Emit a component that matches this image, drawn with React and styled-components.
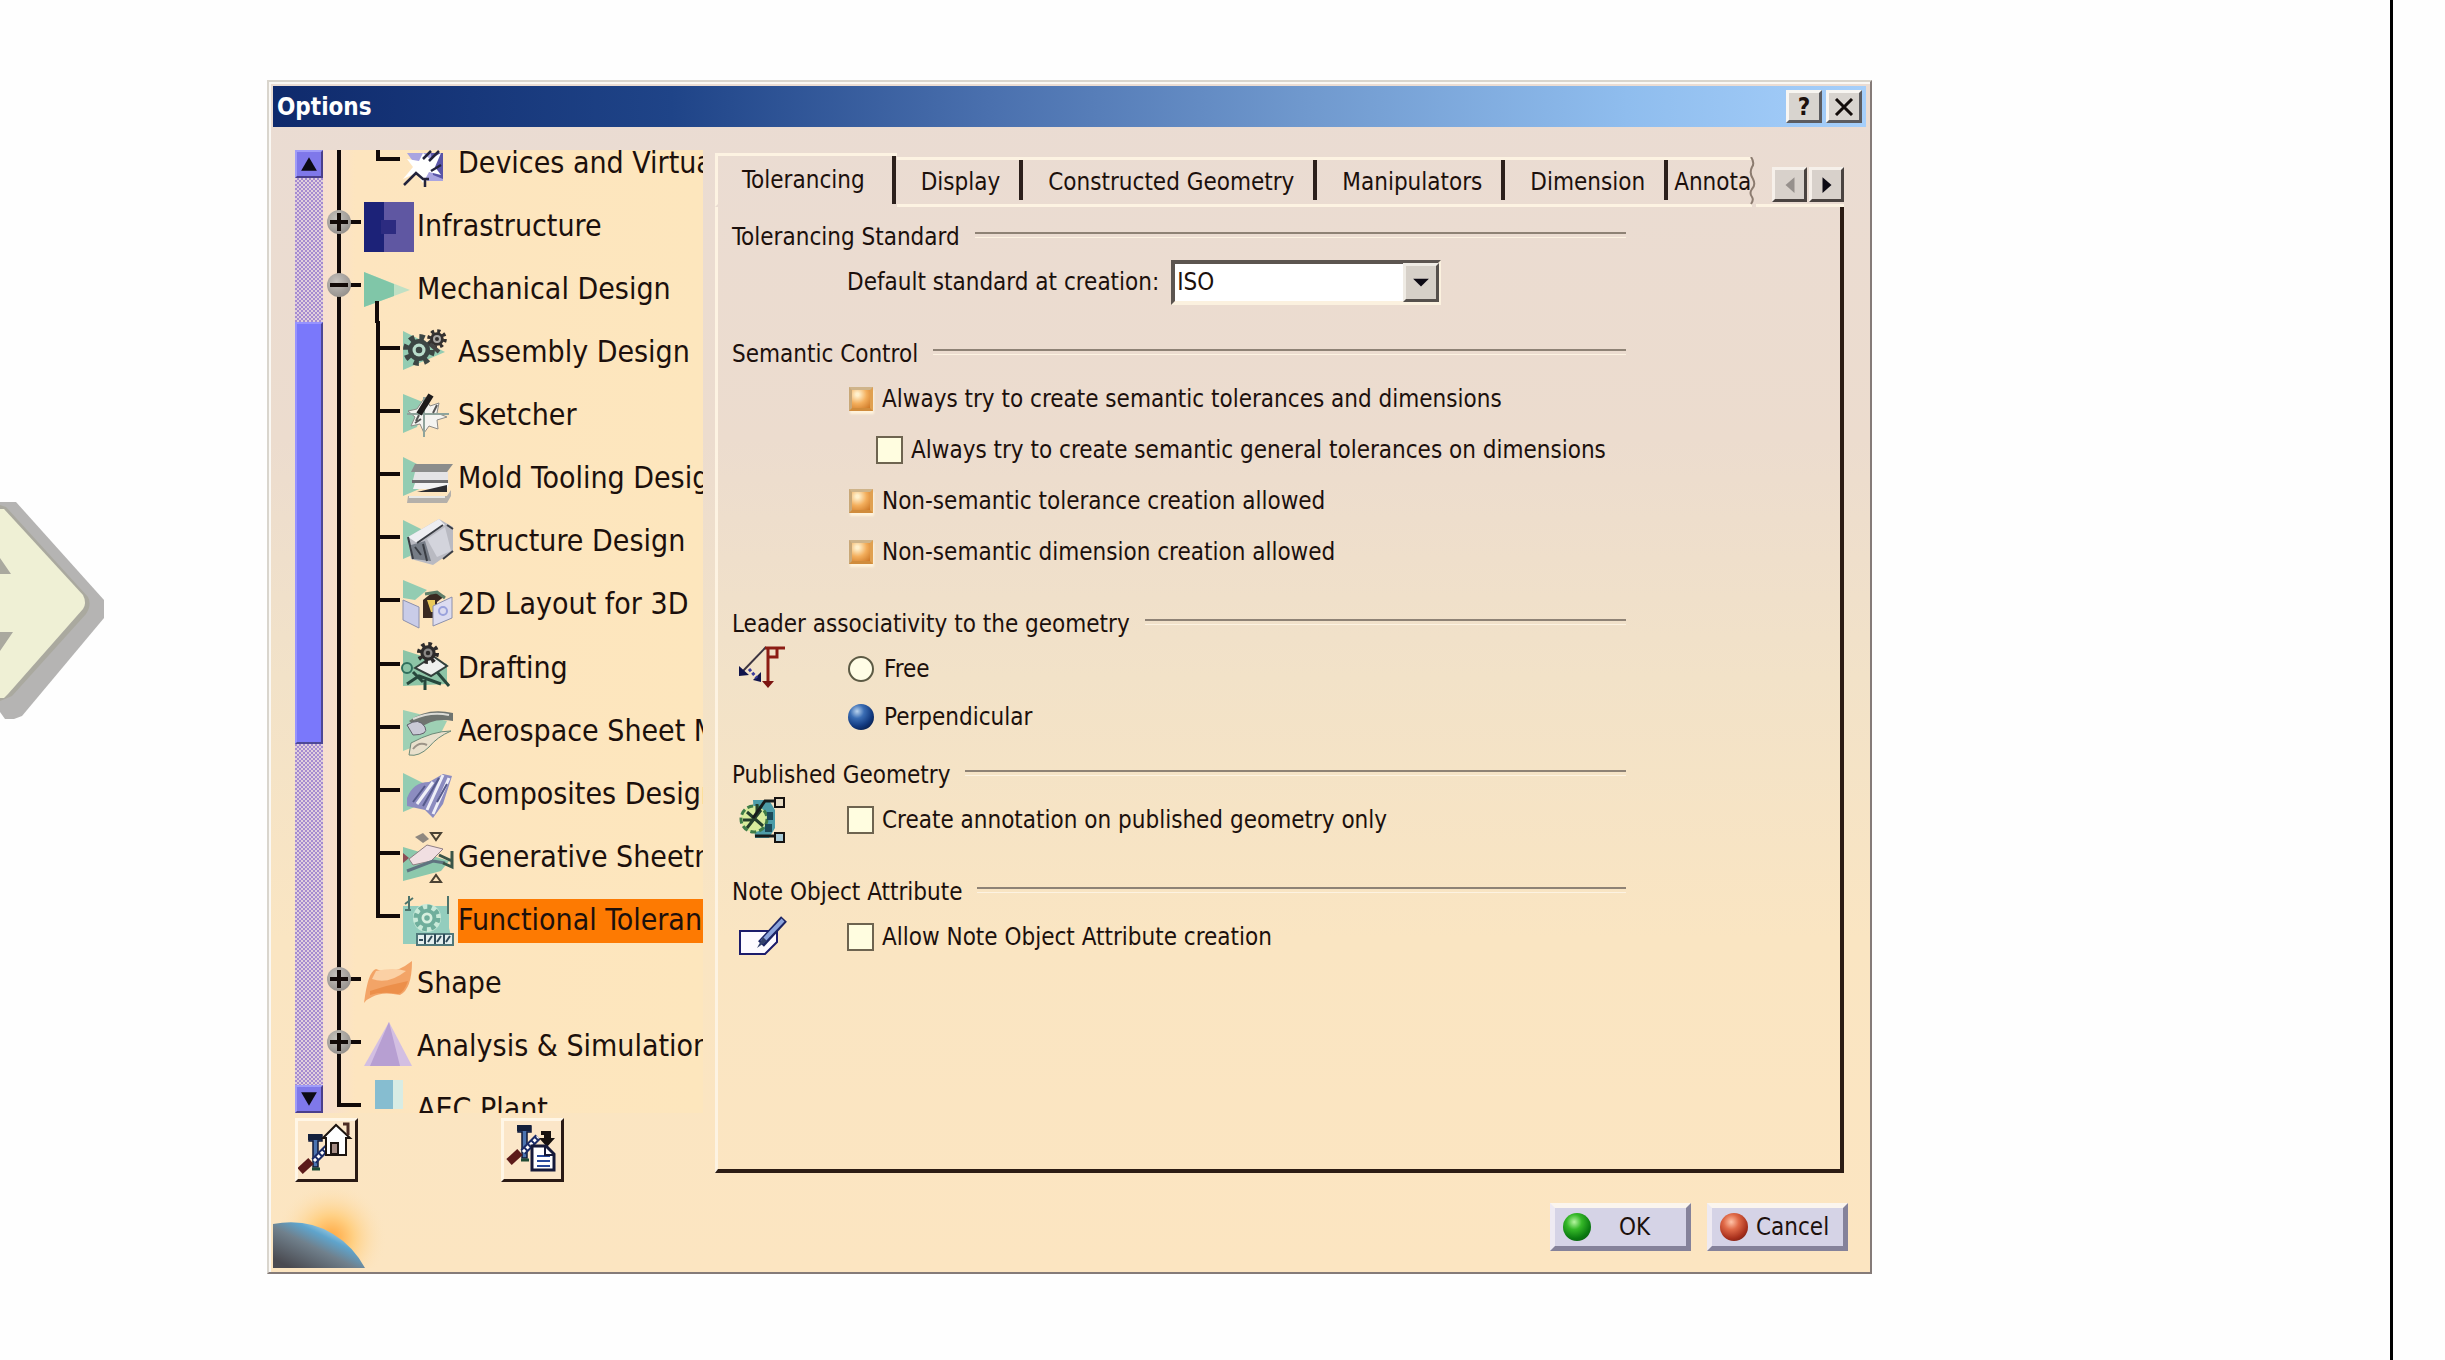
import React, { useState } from "react";
import styled, { createGlobalStyle, css } from "styled-components";

const GlobalStyle = createGlobalStyle`
  * {
    box-sizing: border-box;
  }

  body {
    margin: 0;
    background: #fefefe;
    color: #1c100c;
    font-family: "DejaVu Sans Condensed", "Noto Sans", sans-serif;
    font-size: 24px;
    line-height: 28px;
  }

  button, select, input {
    margin: 0;
    font: inherit;
    color: inherit;
  }
`;

const Page = styled.div`
  display: flex;
  align-items: flex-start;
  min-height: 100vh;
  margin-right: 52px;
  border-right: 3px solid #000;
`;

const Margin = styled.div`
  flex: 0 0 267px;
  padding-top: 502px;

  svg {
    display: block;
  }
`;

const Window = styled.section`
  flex: 0 1 1605px;
  min-width: 0;
  margin-top: 80px;
  border: 2px solid;
  border-color: #d9d5cd #857b78 #857b78 #d9d5cd;
  padding: 4px;
  background: linear-gradient(#eadcd3 0%, #ecdcce 30%, #f2e2c8 50%, #fae5c2 72%, #fce5c1 100%);
  box-shadow: inset 2px 2px 0 #faf8f4;
`;

const TitleBar = styled.header`
  display: flex;
  align-items: center;
  gap: 4px;
  height: 41px;
  padding: 0 4px;
  background: linear-gradient(90deg, #0f2a6c 0%, #1f4488 25%, #4a70ae 45%, #7099ce 65%, #8fbdee 85%, #a6cffa 100%);
`;

const Title = styled.h1`
  margin: 0;
  flex: 1;
  font-size: 24px;
  line-height: 28px;
  color: #fff;
`;

const CaptionButton = styled.button`
  display: flex;
  align-items: center;
  justify-content: center;
  width: 36px;
  height: 33px;
  padding: 0;
  border: 3px solid;
  border-color: #f8f6f2 #5c5c60 #5c5c60 #f8f6f2;
  background: #d8d4cf;
  font-weight: bold;
`;

const Body = styled.div`
  display: flex;
  gap: 12px;
  padding: 23px 22px 0;
`;

const Side = styled.div`
  flex: 0 0 408px;
  min-width: 0;
`;

const TreePane = styled.div`
  display: flex;
  height: 963px;
  overflow: hidden;
  background: linear-gradient(90deg, #f6dfd0 28px, #fde5bf 60px, #fde6bd 100%);
`;

const ScrollBar = styled.div`
  flex: 0 0 28px;
  display: flex;
  flex-direction: column;
  background: repeating-conic-gradient(#a58bd0 0 25%, #e0cfdc 0 50%) 0 0 / 4px 4px;
`;

const ScrollButton = styled.button`
  display: flex;
  align-items: center;
  justify-content: center;
  height: 28px;
  padding: 0;
  border: 2px solid;
  border-color: #a09cf8 #4a3f8c #4a3f8c #a09cf8;
  background: #7f78ea;
`;

const ScrollTrack = styled.div`
  flex: 1;
  padding-top: 144px;
`;

const ScrollThumb = styled.div`
  height: 422px;
  border: 2px solid;
  border-color: #9793ff #4d4796 #4d4796 #9793ff;
  background: #7a78fb;
`;

const Tree = styled.ul`
  flex: 1;
  min-width: 0;
  display: flex;
  flex-direction: column;
  height: 1010px;
  margin: -18px 0 0;
  padding: 0 0 0 14px;
  overflow: hidden;
  list-style: none;
  font-size: 30px;
  line-height: 42px;
`;

const TreeRow = styled.li`
  flex: 1;
  display: flex;
  align-items: center;
  white-space: nowrap;
`;

/* vertical line of one tree level, with an optional branch to the right */
const Trunk = styled.span`
  align-self: stretch;
  flex: 0 0 ${(p) => (p.$level === 1 ? 39 : 27)}px;
  position: relative;

  &::before {
    content: "";
    position: absolute;
    left: 0;
    top: 0;
    bottom: ${(p) => (p.$end ? "calc(50% + 3px)" : 0)};
    width: 4px;
    background: #120a08;
  }

  ${(p) =>
    p.$branch &&
    css`
      &::after {
        content: "";
        position: absolute;
        left: 0;
        right: 3px;
        top: calc(50% - 7px);
        height: 4px;
        background: #120a08;
      }
    `}
`;

const Toggle = styled.button`
  position: absolute;
  z-index: 1;
  left: -10px;
  top: calc(50% - 17px);
  width: 24px;
  height: 24px;
  padding: 0;
  border: 0;
  border-radius: 50%;
  background: radial-gradient(circle at 40% 35%, #c6c2bd, #85817d);

  svg {
    display: block;
  }
`;

const TreeIcon = styled.svg`
  flex: 0 0 50px;
  width: 50px;
  height: 50px;
  overflow: visible;
`;

const TreeLabel = styled.span`
  flex: 1;
  overflow: hidden;
  margin-left: ${(p) => (p.$child ? 5 : 3)}px;
  height: 44px;
  background: ${(p) => (p.$selected ? "#fd7a02" : "transparent")};
`;

const SideTools = styled.div`
  display: flex;
  gap: 143px;
  margin-top: 5px;
`;

const ToolButton = styled.button`
  width: 63px;
  height: 64px;
  padding: 0;
  border: 3px solid;
  border-color: #fff6e6 #2a1a14 #2a1a14 #fff6e6;
  background: #fbe6c8;

  svg {
    display: block;
  }
`;

const Main = styled.div`
  flex: 1;
  min-width: 0;
  display: flex;
  flex-direction: column;
  padding: 3px 0 9px;
`;

const TabList = styled.div`
  display: flex;
  align-items: stretch;
  height: 54px;
`;

const Tab = styled.button`
  flex: none;
  height: 50px;
  align-self: flex-end;
  padding: 0 24px;
  border: 0;
  border-top: 3px solid #fdf3e2;
  border-bottom: 3px solid #fdf3e2;
  background: linear-gradient(#2c201c, #2c201c) right 1px top 0 / 4px 40px no-repeat;
  line-height: 38px;
  white-space: nowrap;

  ${(p) =>
    p.$active &&
    css`
      height: 54px;
      padding: 0 32px 0 24px;
      border-left: 3px solid #fdf3e2;
      border-bottom-color: transparent;
      background-size: 4px 48px;
      line-height: 48px;
    `}

  ${(p) =>
    p.$cut &&
    css`
      width: 83px;
      padding: 0 0 0 5px;
      overflow: hidden;
      background: none;
      text-align: left;
    `}
`;

const TornEdge = styled.svg`
  flex: none;
  align-self: flex-end;
  width: 8px;
  height: 50px;
  margin-left: -4px;
`;

const TabScroller = styled.div`
  flex: 1;
  display: flex;
  justify-content: flex-end;
  gap: 2px;
  padding-top: 14px;
  border-bottom: 3px solid #fdf3e2;
`;

const ArrowButton = styled.button`
  display: flex;
  align-items: center;
  justify-content: center;
  width: 35px;
  height: 35px;
  padding: 0;
  border: 3px solid;
  border-color: #f6f0ea #4a4340 #4a4340 #f6f0ea;
  background: #d8d1cb;
`;

const Panel = styled.div`
  flex: 1;
  padding: 16px 214px 0 14px;
  border: solid;
  border-width: 0 4px 4px 3px;
  border-color: #2c1c14 #2c1c14 #2c1c14 #fdf3e2;
`;

const Group = styled.fieldset`
  min-width: 0;
  margin: 0 0 ${(p) => (p.$tight ? 20 : 34)}px;
  padding: 0;
  border: 0;
`;

const Legend = styled.legend`
  display: flex;
  width: 100%;
  padding: 0;
  gap: 15px;

  &::after {
    content: "";
    flex: 1;
    height: 3px;
    margin-top: 9px;
    border-top: 2px solid #8e8275;
    border-bottom: 1px solid #fdf3e2;
  }
`;

const GroupBody = styled.div`
  display: flex;
  margin-top: 7px;
`;

const IconSlot = styled.div`
  flex: 0 0 115px;
  padding-left: 7px;

  svg {
    display: block;
  }
`;

const Rows = styled.div`
  flex: 1;
  display: flex;
  flex-direction: column;
  gap: ${(p) => p.$gap || 0}px;
`;

const Field = styled.div`
  display: flex;
  align-items: center;
  height: 48px;
  padding-left: ${(p) => (p.$indent ? 29 : 0)}px;
  white-space: nowrap;
`;

const CheckBox = styled.input.attrs({ type: "checkbox" })`
  appearance: none;
  flex: none;
  width: 27px;
  height: 28px;
  margin-right: 8px;
  border: 2px solid #6e6450;
  background: #fffde0;

  &:checked {
    width: 24px;
    height: 24px;
    margin: 0 9px 0 2px;
    border: 3px solid;
    border-color: #cfb48a #e0a050 #d08c3c #c9a878;
    background: radial-gradient(circle at 30% 25%, #fff0cc 8%, #f3ae5c 50%, #cc7624 100%);
    box-shadow: 1px 3px 2px #fff3dc;
  }
`;

const Radio = styled.input.attrs({ type: "radio" })`
  appearance: none;
  flex: none;
  width: 26px;
  height: 26px;
  margin: 0 10px 0 1px;
  border: 2px solid #5c5a44;
  border-radius: 50%;
  background: #fffde6;

  &:checked {
    border: 0;
    background: radial-gradient(circle at 35% 28%, #b9d3ee 0%, #3a6db4 28%, #123a80 60%, #0a2456 78%, #6f9bd0 100%);
  }
`;

const SelectBox = styled.div`
  position: relative;
  width: 270px;
  height: 45px;
  margin-left: 12px;
  border: 4px solid;
  border-color: #5c5550 #fbf1df #fbf1df #5c5550;
  background: #fff;
`;

const Select = styled.select`
  appearance: none;
  width: 100%;
  height: 100%;
  padding: 0 38px 0 2px;
  border: 0;
  background: transparent;
`;

const DropArrow = styled.span`
  position: absolute;
  top: -1px;
  right: -2px;
  display: flex;
  align-items: center;
  justify-content: center;
  width: 36px;
  height: 39px;
  border: 3px solid;
  border-color: #efebe4 #55504c #55504c #efebe4;
  background: #d6d0c8;
  pointer-events: none;
`;

const Footer = styled.footer`
  display: flex;
  align-items: flex-end;
  justify-content: flex-end;
  gap: 16px;
  height: 86px;
  padding-right: 18px;
`;

const GlobeArt = styled.svg`
  width: 130px;
  height: 86px;
  margin-right: auto;
`;

const PushButton = styled.button`
  display: flex;
  align-items: center;
  width: 141px;
  height: 48px;
  margin-bottom: 17px;
  padding: 0 0 0 8px;
  gap: ${(p) => (p.$wide ? 28 : 8)}px;
  border: 5px solid;
  border-color: #fbf5ee #85829a #85829a #eeeaf2;
  background: #d5d3e6;
`;

const Ball = styled.span`
  flex: none;
  width: 28px;
  height: 28px;
  border-radius: 50%;
  background: ${(p) =>
    p.$tone === "green"
      ? "radial-gradient(circle at 40% 32%, #b5f5a0 0%, #35b828 30%, #0a7a10 65%, #0b4a12 100%)"
      : "radial-gradient(circle at 40% 32%, #ffc4a8 0%, #e06a48 30%, #a8301c 65%, #541410 100%)"};
`;

const Gear = ({ x, y, r, fill = "#3c4644", hole = "#b9dccb" }) => (
  <g>
    <circle cx={x} cy={y} r={r} fill="none" stroke={fill} strokeWidth={r * 0.45} strokeDasharray={`${r * 0.4} ${r * 0.385}`} />
    <circle cx={x} cy={y} r={r * 0.85} fill={fill} />
    <circle cx={x} cy={y} r={r * 0.5} fill={hole} />
    <circle cx={x} cy={y} r={r * 0.25} fill={fill} />
  </g>
);

const Wedge = () => <path d="M0 3 L42 24 L0 42 Z" fill="#93ccb2" />;

const icons = {
  devices: (
    <>
      <path d="M4 14 H40 V42 H24 Z" fill="#a9a4e0" />
      <path d="M28 14 H40 V40 L30 36 Z" fill="#5a55a8" />
      <path d="M0 40 L10 28 L4 20 L16 22 L20 14 L27 20 L38 14 L32 28 L38 36 L26 33 L20 44 L13 34 Z" fill="#fff" />
      <path d="M1 46 L13 34 L20 40 H26 M22 40 V48 M36 12 L26 22 M28 12 L20 20 M38 26 L28 32" stroke="#23233c" strokeWidth="2.5" fill="none" />
    </>
  ),
  infrastructure: (
    <>
      <path d="M0 0 H50 V50 H0 Z" fill="#5f57a2" />
      <path d="M0 0 H20 V50 H0 Z" fill="#1c2278" />
      <path d="M17 18 H32 V32 H17 Z" fill="#2c2b80" />
    </>
  ),
  mechanical: (
    <>
      <path d="M0 7 L46 25 L0 42 Z" fill="#bfe0c4" />
      <path d="M0 7 L30 19 V31 L0 42 Z" fill="#80c6a8" />
      <path d="M11 36 H15 V58 H11 Z" fill="#120a08" />
    </>
  ),
  assembly: (
    <>
      <Wedge />
      <Gear x={16} y={22} r={13} />
      <Gear x={34} y={11} r={8} fill="#33302f" hole="#a9a7a4" />
      <path d="M27 16 L36 24" stroke="#444" strokeWidth="4" />
    </>
  ),
  sketcher: (
    <>
      <path d="M0 3 L22 12 L14 36 L0 42 Z" fill="#93ccb2" />
      <path d="M22 6 L27 15 L36 12 L34 22 L44 26 L34 29 L35 38 L26 35 L21 42 L17 33 L8 35 L12 26 L5 20 L14 18 Z" fill="#f4f4f0" stroke="#8d8c88" />
      <path d="M4 23 H46 M21 6 V46" stroke="#8fa49c" strokeWidth="2" />
      <path d="M28 4 L16 23" stroke="#1d1b1b" strokeWidth="6" />
      <path d="M16 24 L13 30 M34 14 L30 22 M12 32 L18 28" stroke="#555" strokeWidth="2" />
    </>
  ),
  mold: (
    <>
      <Wedge />
      <path d="M12 10 H50 L44 18 H8 Z" fill="#8b8d8c" />
      <path d="M12 18 H45 V26 H10 Z" fill="#e4e4e6" />
      <path d="M9 26 H45 V29 H9 Z" fill="#6c6c6e" />
      <path d="M12 29 H46 L44 35 H10 Z" fill="#f3f3f3" />
      <path d="M14 38 L44 31 V38 H16 Z" fill="#2c2c30" />
      <path d="M5 42 H44 L48 36 V42 L44 49 H4 Z" fill="#b4b0aa" />
      <path d="M6 43 H42" stroke="#e9e9e6" strokeWidth="2" />
    </>
  ),
  structure: (
    <>
      <Wedge />
      <path d="M5 20 L36 2 L50 10 L50 34 L30 48 L8 42 Z" fill="#b9bac2" />
      <path d="M5 20 L36 2 L42 8 L14 26 Z" fill="#eeeef2" />
      <path d="M24 22 L42 10 L48 34 L34 40 Z" fill="#d3d4dc" />
      <path d="M8 28 L22 24 L28 44 L10 42 Z" fill="#767c86" />
      <path d="M12 30 L18 38 M20 27 L24 44 M44 8 L50 12 M40 42 L50 34 M5 20 L10 42 M14 26 L40 8" stroke="#3a3d44" strokeWidth="2" />
    </>
  ),
  layout: (
    <>
      <path d="M0 0 L24 10 L12 20 L0 18 Z" fill="#93ccb2" />
      <path d="M20 20 L30 12 L42 16 L34 22 V38 H20 Z" fill="#3a2a22" />
      <path d="M24 20 H32 V32 H28 Z" fill="#e9c95a" />
      <path d="M22 14 L34 12 L42 18" stroke="#5f7f6a" strokeWidth="3" fill="none" />
      <path d="M0 20 L16 27 V48 L0 40 Z" fill="#c9cce8" stroke="#8c90ac" />
      <path d="M30 26 L49 17 V38 L30 46 Z" fill="#dcdcf0" stroke="#8c90ac" />
      <circle cx="40" cy="31" r="4" fill="none" stroke="#9aa2dc" strokeWidth="2" />
    </>
  ),
  drafting: (
    <>
      <path d="M0 6 L44 20 V40 L0 42 Z" fill="#8cc4a6" />
      <path d="M12 24 L30 12 L44 22 L28 32 Z" fill="#eef0ee" stroke="#33403c" strokeWidth="2" />
      <Gear x={25} y={9} r={9} fill="#2d2b2b" hole="#8a8886" />
      <circle cx="4" cy="24" r="5" fill="none" stroke="#2f6f5c" strokeWidth="2" />
      <path d="M4 40 L16 32 L38 40 M22 36 V46 M34 28 L46 42 M10 28 L20 38" stroke="#27473c" strokeWidth="3" fill="none" />
    </>
  ),
  aerospace: (
    <>
      <path d="M0 3 L44 14 L36 30 L0 44 Z" fill="#9ed0b4" />
      <path d="M6 14 Q24 0 50 6 V14 Q30 10 16 22 Z" fill="#6f746f" />
      <path d="M4 18 Q16 10 22 20 Q26 28 10 28 Z" fill="#c9c9d6" stroke="#60606a" />
      <path d="M10 12 Q28 4 46 8" stroke="#dcdcd6" strokeWidth="2" fill="none" />
      <path d="M8 36 Q30 24 48 24 Q34 30 26 40 Q16 50 6 48 Z" fill="#e9e0cc" stroke="#6c8a78" />
      <path d="M10 42 Q16 34 24 38" stroke="#9c9488" strokeWidth="2" fill="none" />
    </>
  ),
  composites: (
    <>
      <Wedge />
      <path d="M4 28 Q10 12 26 12 L40 4 L49 6 L40 34 L30 48 L22 40 L4 36 Z" fill="#8c8cc0" />
      <path d="M40 5 L24 40 M46 8 L30 44 M30 12 L14 34" stroke="#efeff8" strokeWidth="3" />
      <path d="M36 8 L20 36 M44 14 L34 32 M22 16 L10 32" stroke="#565a8c" strokeWidth="2" />
    </>
  ),
  generative: (
    <>
      <path d="M0 14 L20 20 L46 28 L38 38 L0 48 Z" fill="#8cc8ac" />
      <path d="M6 26 L24 12 L40 16 L28 28 L10 32 Z" fill="#f1dfe2" stroke="#8f7f84" />
      <path d="M0 20 L6 25 L0 30 Z" fill="#8c4c54" />
      <path d="M4 38 L30 28 L42 30" stroke="#5f7480" strokeWidth="3" fill="none" />
      <path d="M12 4 L20 0 L26 6 L20 10 Z" fill="#8f8880" />
      <path d="M28 0 H38 L33 7 Z M28 49 H38 L33 42 Z" fill="none" stroke="#4a4234" strokeWidth="2" />
      <path d="M36 22 L49 28 V18 V34 L40 30" fill="none" stroke="#3a5548" strokeWidth="3" />
    </>
  ),
  functional: (
    <>
      <path d="M0 10 H46 V32 L50 48 H0 Z" fill="#93cdbd" />
      <circle cx="24" cy="22" r="14" fill="#c9ead9" />
      <Gear x={24} y={22} r={11} fill="#6fae9c" hole="#d6efdf" />
      <path d="M6 0 V14 M2 8 L10 2 M45 0 V18 M2 14 H8" stroke="#4d746c" strokeWidth="2" fill="none" />
      <path d="M14 38 H50 V49 H14 Z" fill="#e4efee" stroke="#50787a" strokeWidth="2" />
      <path d="M22 38 V48 M32 38 V48 M41 38 V48 M16 44 H20 M25 46 L29 40 M34 46 L38 40 M43 46 L47 40" stroke="#2f4a58" strokeWidth="2" />
    </>
  ),
  shape: (
    <>
      <path d="M0 44 Q4 12 12 10 Q28 18 48 2 Q48 30 36 36 Q18 32 8 38 Q3 40 0 44 Z" fill="#f3a467" />
      <path d="M8 20 Q24 26 42 12 Q30 8 12 12 Z" fill="#fbd0a4" />
      <path d="M6 32 Q24 26 44 22 Q40 34 34 35 Q18 32 6 36 Z" fill="#ec8f4a" />
    </>
  ),
  analysis: (
    <>
      <path d="M25 0 L48 44 H0 Z" fill="#d3bfe2" />
      <path d="M25 0 L36 44 H6 Z" fill="#b79fd2" />
    </>
  ),
  plant: (
    <>
      <path d="M11 -5 H39 V24 H11 Z" fill="#d8ece4" />
      <path d="M11 -5 H29 V24 H11 Z" fill="#86bdd0" />
    </>
  ),
};

const tree = [
  { label: "Devices and Virtual", icon: "devices", level: 2, last: true },
  { label: "Infrastructure", icon: "infrastructure", level: 1, toggle: "plus" },
  { label: "Mechanical Design", icon: "mechanical", level: 1, toggle: "minus" },
  { label: "Assembly Design", icon: "assembly", level: 2 },
  { label: "Sketcher", icon: "sketcher", level: 2 },
  { label: "Mold Tooling Design", icon: "mold", level: 2 },
  { label: "Structure Design", icon: "structure", level: 2 },
  { label: "2D Layout for 3D", icon: "layout", level: 2 },
  { label: "Drafting", icon: "drafting", level: 2 },
  { label: "Aerospace Sheet M", icon: "aerospace", level: 2 },
  { label: "Composites Design", icon: "composites", level: 2 },
  { label: "Generative Sheetm", icon: "generative", level: 2 },
  { label: "Functional Toleran", icon: "functional", level: 2, last: true },
  { label: "Shape", icon: "shape", level: 1, toggle: "plus" },
  { label: "Analysis & Simulation", icon: "analysis", level: 1, toggle: "plus" },
  { label: "AEC Plant", icon: "plant", level: 1, last: true },
];

const tabs = ["Tolerancing", "Display", "Constructed Geometry", "Manipulators", "Dimension", "Annotation"];

const Triangle = ({ dir, color = "#0c0a14" }) => {
  const d = { up: "M8 2 L15 14 H1 Z", down: "M8 14 L15 2 H1 Z", left: "M4 8 L12 1 V15 Z", right: "M12 8 L4 1 V15 Z", drop: "M8 12 L15 5 H1 Z" }[dir];
  return (
    <svg width="18" height="18" viewBox="0 0 16 16" aria-hidden="true">
      <path d={d} fill={color} />
    </svg>
  );
};

const TreeItem = ({ item, selected, onSelect }) => {
  const child = item.level === 2;
  return (
    <TreeRow role="treeitem" aria-selected={selected} onClick={onSelect}>
      <Trunk $level={child ? 1 : 0} $branch={!child} $end={!child && item.last}>
        {item.toggle && (
          <Toggle aria-label={item.toggle === "plus" ? "Expand" : "Collapse"}>
            <svg width="24" height="24" viewBox="0 0 24 24">
              <path d={item.toggle === "plus" ? "M3 12 H21 M12 3 V21" : "M3 12 H21"} stroke="#120a08" strokeWidth="4" />
            </svg>
          </Toggle>
        )}
      </Trunk>
      {child && <Trunk $branch $end={item.last} />}
      <TreeIcon viewBox="0 0 50 50" aria-hidden="true">{icons[item.icon]}</TreeIcon>
      <TreeLabel $child={child} $selected={selected}>{item.label}</TreeLabel>
    </TreeRow>
  );
};

const Check = ({ id, label, on, indent }) => (
  <Field $indent={indent}>
    <CheckBox id={id} defaultChecked={on} />
    <label htmlFor={id}>{label}</label>
  </Field>
);

const Hammer = () => (
  <>
    <path d="M11 14 H24 V20 H20 V46 H15 V20 H11 Z" fill="#4c74b0" stroke="#101a38" strokeWidth="1.5" />
    <path d="M10 13 H24 V19 H10 Z" fill="#14203c" />
    <path d="M16 40 L31 25" stroke="#1b2c68" strokeWidth="7" />
    <path d="M16 40 L31 25" stroke="#fff" strokeWidth="3" strokeDasharray="3 2" />
    <path d="M2 50 L13 40" stroke="#5c1a1a" strokeWidth="8" />
    <path d="M14 48 H22" stroke="#1f4a34" strokeWidth="3" />
  </>
);

const App = () => {
  const [activeTab, setActiveTab] = useState("Tolerancing");
  const [selected, setSelected] = useState("Functional Toleran");

  return (
    <>
      <GlobalStyle />
      <Page>
        <Margin>
          <svg width="106" height="218" viewBox="0 0 106 218" aria-hidden="true">
            <path d="M0 0 H16 L104 98 V116 L22 214 L14 217 H5 L0 210 Z" fill="#b5b4b3" />
            <path d="M0 3 L6 5 L88 95 Q92 103 86 112 L12 194 L0 199 Z" fill="#aaa99f" />
            <path d="M0 7 H4 L83 93 Q87 101 83 107 L8 192 L4 196 H0 Z" fill="#eff0d5" />
            <path d="M0 56 L11 72 H0 Z M0 130 H13 L0 149 Z" fill="#aaa99f" />
          </svg>
        </Margin>

        <Window>
          <TitleBar>
            <Title>Options</Title>
            <CaptionButton aria-label="Help">?</CaptionButton>
            <CaptionButton aria-label="Close">
              <svg width="20" height="18" viewBox="0 0 20 18">
                <path d="M2 1 L18 17 M18 1 L2 17" stroke="#120c0a" strokeWidth="3" />
              </svg>
            </CaptionButton>
          </TitleBar>

          <Body>
            <Side>
              <TreePane>
                <ScrollBar>
                  <ScrollButton aria-label="Scroll up"><Triangle dir="up" /></ScrollButton>
                  <ScrollTrack>
                    <ScrollThumb />
                  </ScrollTrack>
                  <ScrollButton aria-label="Scroll down"><Triangle dir="down" /></ScrollButton>
                </ScrollBar>
                <Tree role="tree">
                  {tree.map((item) => (
                    <TreeItem
                      key={item.label}
                      item={item}
                      selected={selected === item.label}
                      onSelect={() => setSelected(item.label)}
                    />
                  ))}
                </Tree>
              </TreePane>
              <SideTools>
                <ToolButton aria-label="Reset parameters">
                  <svg width="57" height="58" viewBox="0 0 57 58">
                    <Hammer />
                    <path d="M25 17 L38 4 L52 17 H48 V34 H28 V17 Z" fill="#fff" stroke="#1c1410" strokeWidth="2" />
                    <path d="M45 3 H50 V14" fill="none" stroke="#4c2c24" strokeWidth="3" />
                    <path d="M33 22 H40 V33 H33 Z" fill="#a58c84" stroke="#1c1410" strokeWidth="2" />
                  </svg>
                </ToolButton>
                <ToolButton aria-label="Dump parameters">
                  <svg width="57" height="58" viewBox="0 0 57 58">
                    <g transform="translate(3 -9)"><Hammer /></g>
                    <path d="M37 10 H47 V17 H51 L43 26 L35 17 H40 V14 H37 Z" fill="#17110f" />
                    <path d="M28 25 H42 L50 33 V49 H28 Z" fill="#fff" stroke="#161a3a" strokeWidth="3" />
                    <path d="M33 35 H46 M33 40 H46 M33 45 H46" stroke="#27499c" strokeWidth="2" />
                    <path d="M41 25 V34 H50" fill="none" stroke="#161a3a" strokeWidth="2" />
                  </svg>
                </ToolButton>
              </SideTools>
            </Side>

            <Main>
              <TabList role="tablist">
                {tabs.map((tab, i) => (
                  <Tab
                    key={tab}
                    role="tab"
                    aria-selected={tab === activeTab}
                    $active={tab === activeTab}
                    $cut={i === tabs.length - 1}
                    onClick={() => setActiveTab(tab)}
                  >
                    {tab}
                  </Tab>
                ))}
                <TornEdge viewBox="0 0 8 50" aria-hidden="true">
                  <path d="M3 0 Q7 6 4 10 Q1 16 5 22 Q8 28 4 32 Q1 36 4 40 Q6 43 3 47" fill="none" stroke="#8c7c70" strokeWidth="2" />
                </TornEdge>
                <TabScroller>
                  <ArrowButton aria-label="Previous tabs" disabled><Triangle dir="left" color="#96908c" /></ArrowButton>
                  <ArrowButton aria-label="Next tabs"><Triangle dir="right" /></ArrowButton>
                </TabScroller>
              </TabList>

              <Panel role="tabpanel">
                <Group>
                  <Legend>Tolerancing Standard</Legend>
                  <GroupBody>
                    <IconSlot />
                    <Field>
                      <label htmlFor="standard">Default standard at creation:</label>
                      <SelectBox>
                        <Select id="standard" defaultValue="ISO">
                          <option>ISO</option>
                        </Select>
                        <DropArrow><Triangle dir="drop" /></DropArrow>
                      </SelectBox>
                    </Field>
                  </GroupBody>
                </Group>

                <Group>
                  <Legend>Semantic Control</Legend>
                  <GroupBody>
                    <IconSlot />
                    <Rows $gap={3}>
                      <Check id="semTol" label="Always try to create semantic tolerances and dimensions" on />
                      <Check id="semGen" label="Always try to create semantic general tolerances on dimensions" indent />
                      <Check id="nonTol" label="Non-semantic tolerance creation allowed" on />
                      <Check id="nonDim" label="Non-semantic dimension creation allowed" on />
                    </Rows>
                  </GroupBody>
                </Group>

                <Group $tight>
                  <Legend>Leader associativity to the geometry</Legend>
                  <GroupBody>
                    <IconSlot>
                      <svg width="48" height="48" viewBox="0 0 48 48" aria-hidden="true">
                        <path d="M27 2 L4 26" stroke="#3c3440" strokeWidth="2" />
                        <path d="M26 3 H46 M29 2 V38 M30 12 H38 V3" stroke="#8c1c14" strokeWidth="3" fill="none" />
                        <path d="M23 36 H35 L29 43 Z" fill="#7c1410" />
                        <path d="M0 21 L10 30 L0 31 Z M14 35 L22 27 V37 Z" fill="#10144c" />
                        <path d="M10 24 L18 33" stroke="#3c3c9c" strokeWidth="3" strokeDasharray="3 2" />
                      </svg>
                    </IconSlot>
                    <Rows>
                      <Field>
                        <Radio id="free" name="leader" />
                        <label htmlFor="free">Free</label>
                      </Field>
                      <Field>
                        <Radio id="perp" name="leader" defaultChecked />
                        <label htmlFor="perp">Perpendicular</label>
                      </Field>
                    </Rows>
                  </GroupBody>
                </Group>

                <Group>
                  <Legend>Published Geometry</Legend>
                  <GroupBody>
                    <IconSlot>
                      <svg width="48" height="48" viewBox="0 0 48 48" aria-hidden="true">
                        <path d="M14 4 H30 L36 14 V32 L30 42 H16 Z" fill="#4c9ca8" />
                        <circle cx="15" cy="23" r="13" fill="#d8ec9c" stroke="#3f7c48" strokeWidth="3" strokeDasharray="6 3" />
                        <path d="M8 16 L24 30 M22 14 L8 32 M4 24 H14 M18 8 V16" stroke="#25402c" strokeWidth="3" />
                        <path d="M14 22 L26 5 H36 M16 40 H36" stroke="#161c1c" strokeWidth="3" fill="none" />
                        <path d="M28 16 H34 V24 H28 Z M26 28 H33 V36 H26 Z" fill="#1c4a58" />
                        <path d="M36 2 H45 V11 H36 Z" fill="#e8dcc4" stroke="#161210" strokeWidth="2" />
                        <path d="M36 37 H45 V46 H36 Z" fill="#a9ccd8" stroke="#161210" strokeWidth="2" />
                      </svg>
                    </IconSlot>
                    <Rows>
                      <Check id="published" label="Create annotation on published geometry only" />
                    </Rows>
                  </GroupBody>
                </Group>

                <Group>
                  <Legend>Note Object Attribute</Legend>
                  <GroupBody>
                    <IconSlot>
                      <svg width="48" height="48" viewBox="0 0 48 48" aria-hidden="true">
                        <path d="M1 18 H38 V29 L26 41 H1 Z" fill="#fdfaff" stroke="#1c1c6c" strokeWidth="2" />
                        <path d="M22 31 L45 6" stroke="#1c2464" strokeWidth="8" />
                        <path d="M23 29 L44 7" stroke="#8ca4dc" strokeWidth="4" />
                        <path d="M18 35 L24 24 L28 28 Z" fill="#33406c" />
                      </svg>
                    </IconSlot>
                    <Rows>
                      <Check id="note" label="Allow Note Object Attribute creation" />
                    </Rows>
                  </GroupBody>
                </Group>
              </Panel>
            </Main>
          </Body>

          <Footer>
            <GlobeArt viewBox="0 0 130 86" aria-hidden="true">
              <defs>
                <radialGradient id="glow" cx="58" cy="56" r="56" gradientUnits="userSpaceOnUse">
                  <stop offset="0" stopColor="#ffa63e" />
                  <stop offset="0.4" stopColor="#ffd084" />
                  <stop offset="1" stopColor="#fce5c1" stopOpacity="0" />
                </radialGradient>
                <linearGradient id="globe" x1="0.1" y1="0.9" x2="0.8" y2="0.2">
                  <stop offset="0" stopColor="#4a4a50" />
                  <stop offset="0.5" stopColor="#70808c" />
                  <stop offset="0.75" stopColor="#5fa4cc" />
                  <stop offset="1" stopColor="#b8dcec" />
                </linearGradient>
              </defs>
              <path d="M0 0 H130 V86 H0 Z" fill="url(#glow)" />
              <path d="M0 42 Q34 36 60 52 Q80 64 92 86 H0 Z" fill="url(#globe)" />
            </GlobeArt>
            <PushButton $wide>
              <Ball $tone="green" />
              OK
            </PushButton>
            <PushButton>
              <Ball $tone="red" />
              Cancel
            </PushButton>
          </Footer>
        </Window>
      </Page>
    </>
  );
};

export default App;
